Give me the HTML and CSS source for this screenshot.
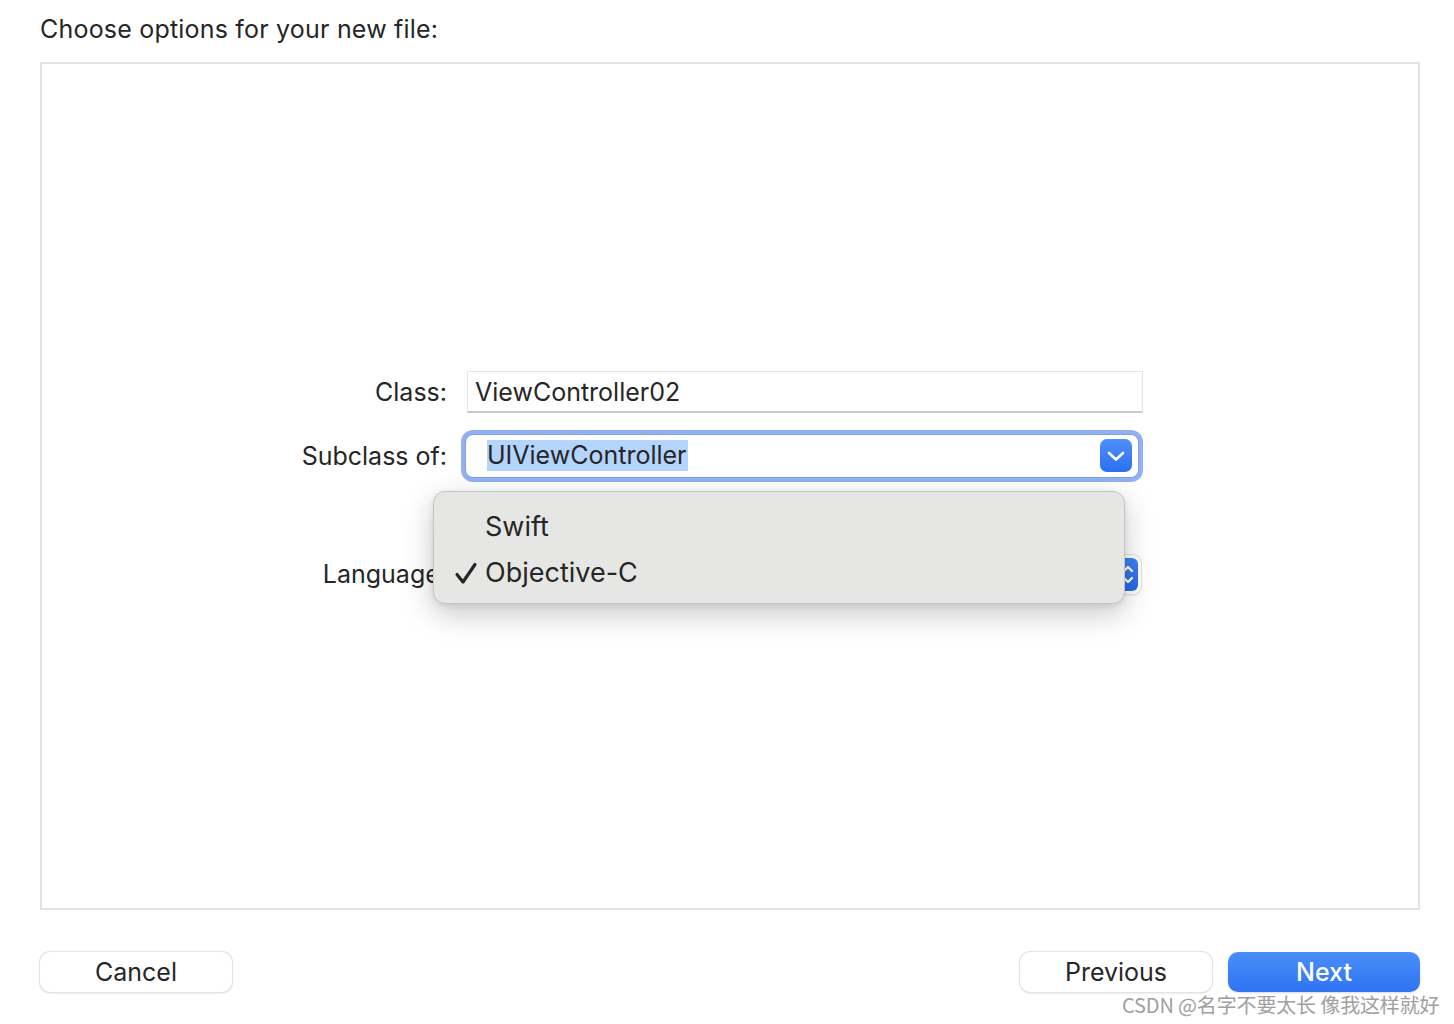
FILE: index.html
```html
<!DOCTYPE html>
<html lang="en">
<head>
<meta charset="utf-8">
<title>Choose options for your new file</title>
<link rel="stylesheet" href="styles.css">
</head>
<body>
<div class="window">
  <h1 class="title">Choose options for your new file:</h1>
  <div class="panel">
    <div class="form">
      <label class="label">Class:</label>
      <div class="textfield">ViewController02</div>

      <label class="label label-sub">Subclass of:</label>
      <div class="combo">
        <span class="combo-text"><span class="selection">UIViewController</span></span>
        <span class="combo-btn">
          <svg width="32" height="33" viewBox="0 0 32 33"><path d="M9 14 L16 20.5 L23 14" fill="none" stroke="#fff" stroke-width="2.6" stroke-linecap="round" stroke-linejoin="round"/></svg>
        </span>
      </div>

      <label class="label label-lang">Language:</label>
      <div class="popup">
        <span class="popup-text"></span>
        <span class="popup-btn">
          <svg width="20" height="33" viewBox="0 0 20 33"><path d="M6 13 L10 9 L14 13 M6 20 L10 24 L14 20" fill="none" stroke="#fff" stroke-width="2.4" stroke-linecap="round" stroke-linejoin="round"/></svg>
        </span>
      </div>
    </div>
  </div>
  <div class="buttons">
    <button class="btn">Cancel</button>
    <div class="spacer"></div>
    <button class="btn">Previous</button>
    <button class="btn btn-primary">Next</button>
  </div>

  <div class="menu">
    <div class="menu-item"><span class="check"></span>Swift</div>
    <div class="menu-item"><span class="check"><svg width="24" height="24" viewBox="0 0 24 24"><path d="M3 12.5 L9 20 L21 2.5" fill="none" stroke="#262626" stroke-width="3.2" stroke-linecap="round" stroke-linejoin="round"/></svg></span>Objective-C</div>
  </div>

  <div class="watermark">CSDN @名字不要太长 像我这样就好</div>
</div>
</body>
</html>
```

FILE: styles.css
```css
* { box-sizing: border-box; }
html, body {
  margin: 0;
  padding: 0;
  background: #ffffff;
}
body {
  font-family: Inter, "Noto Sans", "Liberation Sans", sans-serif;
  color: #262626;
}
.window {
  position: relative;
  width: 1454px;
  height: 1024px;
  overflow: hidden;
  padding: 0 34px 0 40px;
}
.title {
  margin: 0;
  padding-top: 13px;
  font-size: 25px;
  font-weight: 400;
  line-height: 32px;
  height: 62px;
  letter-spacing: 0.2px;
}
.panel {
  width: 1380px;
  height: 848px;
  border: 2px solid #e2e2e2;
  background: #fff;
  padding-top: 307px;
}
.form {
  display: grid;
  grid-template-columns: 405px 676px;
  column-gap: 20px;
  align-items: center;
}
.label {
  text-align: right;
  font-size: 25px;
  line-height: 42px;
}
.label-sub { margin-top: 22px; }
.label-lang { margin-top: 76px; }
.textfield {
  height: 42px;
  border: 1px solid #e4e4e4;
  border-bottom: 2px solid #c9c9c9;
  padding-left: 7px;
  font-size: 25px;
  line-height: 40px;
  background: #fff;
}
.combo {
  margin-top: 21px;
  height: 42px;
  width: 672px;
  margin-left: -1px;
  border-radius: 7px;
  background: #fff;
  box-shadow: 0 0 0 1px #7ba1ee, 0 0 0 5px #93b1f2;
  display: flex;
  align-items: center;
  padding-left: 21px;
  padding-right: 6px;
}
.combo-text {
  flex: 1;
  font-size: 25px;
  line-height: 31px;
}
.selection {
  background: #b3d4fd;
  display: inline-block;
  line-height: 31px;
  padding-right: 1px;
}
.combo-btn {
  width: 32px;
  height: 33px;
  border-radius: 7px;
  background: linear-gradient(#4e90f9, #2c6ff0);
  display: flex;
}
.popup {
  margin-top: 76px;
  height: 39px;
  width: 674px;
  border-radius: 8px;
  background: #fff;
  box-shadow: 0 0 0 1px #e2e2e2, 0 1px 2px rgba(0,0,0,0.15);
  display: flex;
  align-items: center;
  padding-left: 18px;
  padding-right: 3px;
}
.popup-text { flex: 1; }
.popup-btn {
  width: 20px;
  height: 33px;
  border-radius: 6px;
  background: linear-gradient(#3f82f5, #2a66e6);
  display: flex;
}
.buttons {
  display: flex;
  align-items: center;
  gap: 16px;
  margin-top: 42px;
  width: 1380px;
}
.spacer { flex: 1; }
.btn {
  width: 192px;
  height: 40px;
  border: none;
  border-radius: 10px;
  background: #fff;
  color: #262626;
  font-family: inherit;
  font-size: 25px;
  line-height: 40px;
  padding: 0;
  box-shadow: 0 0 0 1px #e3e3e3, 0 1px 2px rgba(0,0,0,0.22);
}
.btn-primary {
  background: linear-gradient(#4a8ef9, #2f73f3);
  color: #fff;
  font-weight: 500;
  box-shadow: 0 1px 2px rgba(0,0,0,0.15);
}
.menu {
  position: absolute;
  left: 433px;
  top: 491px;
  width: 692px;
  height: 113px;
  background: #e6e6e5;
  border: 1px solid #c4c4c4;
  border-radius: 12px;
  box-shadow: 0 10px 30px rgba(0,0,0,0.22), 0 2px 6px rgba(0,0,0,0.08);
  padding-top: 11px;
}
.menu-item {
  display: flex;
  align-items: center;
  height: 46px;
  font-size: 27px;
  padding-left: 20px;
}
.check {
  width: 31px;
  height: 24px;
  display: inline-block;
}
.watermark {
  position: absolute;
  left: 1122px;
  top: 991px;
  font-family: "Noto Sans CJK SC", "Noto Sans", sans-serif;
  font-size: 20px;
  line-height: 28px;
  color: #a0a0a0;
  white-space: nowrap;
  letter-spacing: -0.15px;
}
```
